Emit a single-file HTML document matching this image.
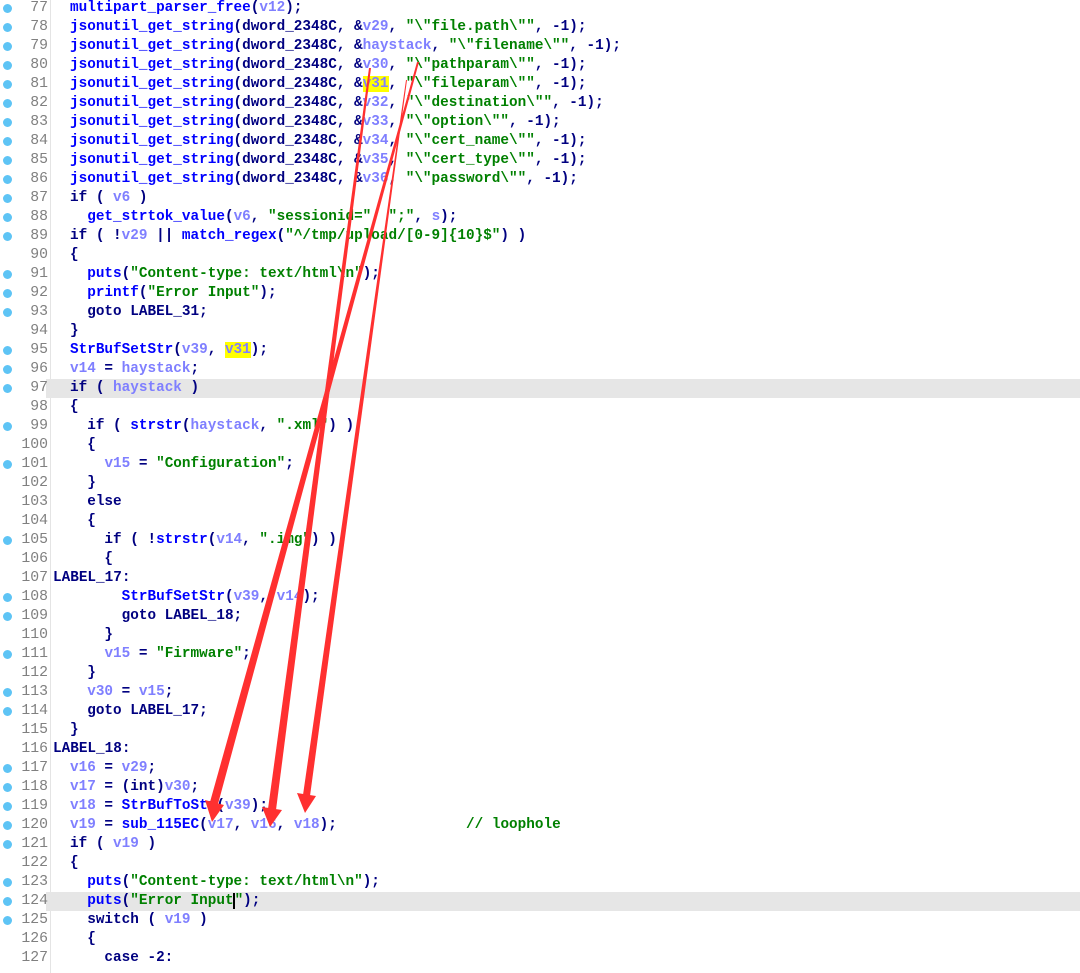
<!DOCTYPE html>
<html><head><meta charset="utf-8"><style>
html,body{margin:0;padding:0;background:#fff;width:1080px;height:973px;overflow:hidden}
#w{position:relative;width:1080px;height:973px}
.row{position:absolute;left:0;width:1080px;height:19px;font:bold 14.35px/19px "Liberation Mono",monospace;color:#000080;white-space:pre}
.hl{background:#e6e6e6;left:46px;width:1034px}
.dot{position:absolute;left:3px;top:5px;width:9px;height:9px;border-radius:50%;background:#5ec4f5}
.ln{position:absolute;left:14px;width:34px;text-align:right;color:#808080;font-weight:normal;font-size:14.8px}
.c{position:absolute;left:70px}
.f{color:#0000ff}.v{color:#7f7fff}.s{color:#008000}.y{background:#ffff00}
#sep{position:absolute;left:50px;top:0;width:1px;height:973px;background:#e4e4e4}
</style></head><body><div id="w">
<div id="sep"></div>
<div id="code"></div>
<svg width="1080" height="973" style="position:absolute;left:0;top:0" fill="#ff3030">
<polygon points="417,62 419,62 218,804 210,802"/>
<polygon points="205,800 224,805 212,822"/>
<polygon points="369,68 371,68 276,810 268,809"/>
<polygon points="262,807 282,810 270,827"/>
<polygon points="406,80 407,80 310,796 303,795"/>
<polygon points="297,793 316,796 305,813"/>
</svg>
</div>
<script>
var L=[
[77,1,'<span class="f">multipart_parser_free</span>(<span class="v">v12</span>);'],
[78,1,'<span class="f">jsonutil_get_string</span>(dword_2348C, &amp;<span class="v">v29</span>, <span class="s">"\\"file.path\\""</span>, -1);'],
[79,1,'<span class="f">jsonutil_get_string</span>(dword_2348C, &amp;<span class="v">haystack</span>, <span class="s">"\\"filename\\""</span>, -1);'],
[80,1,'<span class="f">jsonutil_get_string</span>(dword_2348C, &amp;<span class="v">v30</span>, <span class="s">"\\"pathparam\\""</span>, -1);'],
[81,1,'<span class="f">jsonutil_get_string</span>(dword_2348C, &amp;<span class="v y">v31</span>, <span class="s">"\\"fileparam\\""</span>, -1);'],
[82,1,'<span class="f">jsonutil_get_string</span>(dword_2348C, &amp;<span class="v">v32</span>, <span class="s">"\\"destination\\""</span>, -1);'],
[83,1,'<span class="f">jsonutil_get_string</span>(dword_2348C, &amp;<span class="v">v33</span>, <span class="s">"\\"option\\""</span>, -1);'],
[84,1,'<span class="f">jsonutil_get_string</span>(dword_2348C, &amp;<span class="v">v34</span>, <span class="s">"\\"cert_name\\""</span>, -1);'],
[85,1,'<span class="f">jsonutil_get_string</span>(dword_2348C, &amp;<span class="v">v35</span>, <span class="s">"\\"cert_type\\""</span>, -1);'],
[86,1,'<span class="f">jsonutil_get_string</span>(dword_2348C, &amp;<span class="v">v36</span>, <span class="s">"\\"password\\""</span>, -1);'],
[87,1,'if ( <span class="v">v6</span> )'],
[88,1,'  <span class="f">get_strtok_value</span>(<span class="v">v6</span>, <span class="s">"sessionid="</span>, <span class="s">";"</span>, <span class="v">s</span>);'],
[89,1,'if ( !<span class="v">v29</span> || <span class="f">match_regex</span>(<span class="s">"^/tmp/upload/[0-9]{10}$"</span>) )'],
[90,0,'{'],
[91,1,'  <span class="f">puts</span>(<span class="s">"Content-type: text/html\\n"</span>);'],
[92,1,'  <span class="f">printf</span>(<span class="s">"Error Input"</span>);'],
[93,1,'  goto LABEL_31;'],
[94,0,'}'],
[95,1,'<span class="f">StrBufSetStr</span>(<span class="v">v39</span>, <span class="v y">v31</span>);'],
[96,1,'<span class="v">v14</span> = <span class="v">haystack</span>;'],
[97,1,'if ( <span class="v">haystack</span> )',1],
[98,0,'{'],
[99,1,'  if ( <span class="f">strstr</span>(<span class="v">haystack</span>, <span class="s">".xml"</span>) )'],
[100,0,'  {'],
[101,1,'    <span class="v">v15</span> = <span class="s">"Configuration"</span>;'],
[102,0,'  }'],
[103,0,'  else'],
[104,0,'  {'],
[105,1,'    if ( !<span class="f">strstr</span>(<span class="v">v14</span>, <span class="s">".img"</span>) )'],
[106,0,'    {'],
[107,0,'LABEL_17:',0,-2],
[108,1,'      <span class="f">StrBufSetStr</span>(<span class="v">v39</span>, <span class="v">v14</span>);'],
[109,1,'      goto LABEL_18;'],
[110,0,'    }'],
[111,1,'    <span class="v">v15</span> = <span class="s">"Firmware"</span>;'],
[112,0,'  }'],
[113,1,'  <span class="v">v30</span> = <span class="v">v15</span>;'],
[114,1,'  goto LABEL_17;'],
[115,0,'}'],
[116,0,'LABEL_18:',0,-2],
[117,1,'<span class="v">v16</span> = <span class="v">v29</span>;'],
[118,1,'<span class="v">v17</span> = (int)<span class="v">v30</span>;'],
[119,1,'<span class="v">v18</span> = <span class="f">StrBufToStr</span>(<span class="v">v39</span>);'],
[120,1,'<span class="v">v19</span> = <span class="f">sub_115EC</span>(<span class="v">v17</span>, <span class="v">v16</span>, <span class="v">v18</span>);               <span class="s">// loophole</span>'],
[121,1,'if ( <span class="v">v19</span> )'],
[122,0,'{'],
[123,1,'  <span class="f">puts</span>(<span class="s">"Content-type: text/html\\n"</span>);'],
[124,1,'  <span class="f">puts</span>(<span class="s">"Error Input<span style="border-left:2px solid #000;margin-left:-1px"></span>"</span>);',1],
[125,1,'  switch ( <span class="v">v19</span> )'],
[126,0,'  {'],
[127,0,'    case -2:']
];
var h='';
L.forEach(function(r,i){
 var t=-1.5+i*19;
 if(r[3])h+='<div class="row hl" style="top:'+t+'px"></div>';
 h+='<div class="row" style="top:'+t+'px">'+(r[1]?'<div class="dot"></div>':'')+'<span class="ln">'+r[0]+'</span><span class="c"'+(r[4]?' style="left:53px"':'')+'>'+r[2]+'</span></div>';
});
document.getElementById('code').innerHTML=h;
</script>
</body></html>
